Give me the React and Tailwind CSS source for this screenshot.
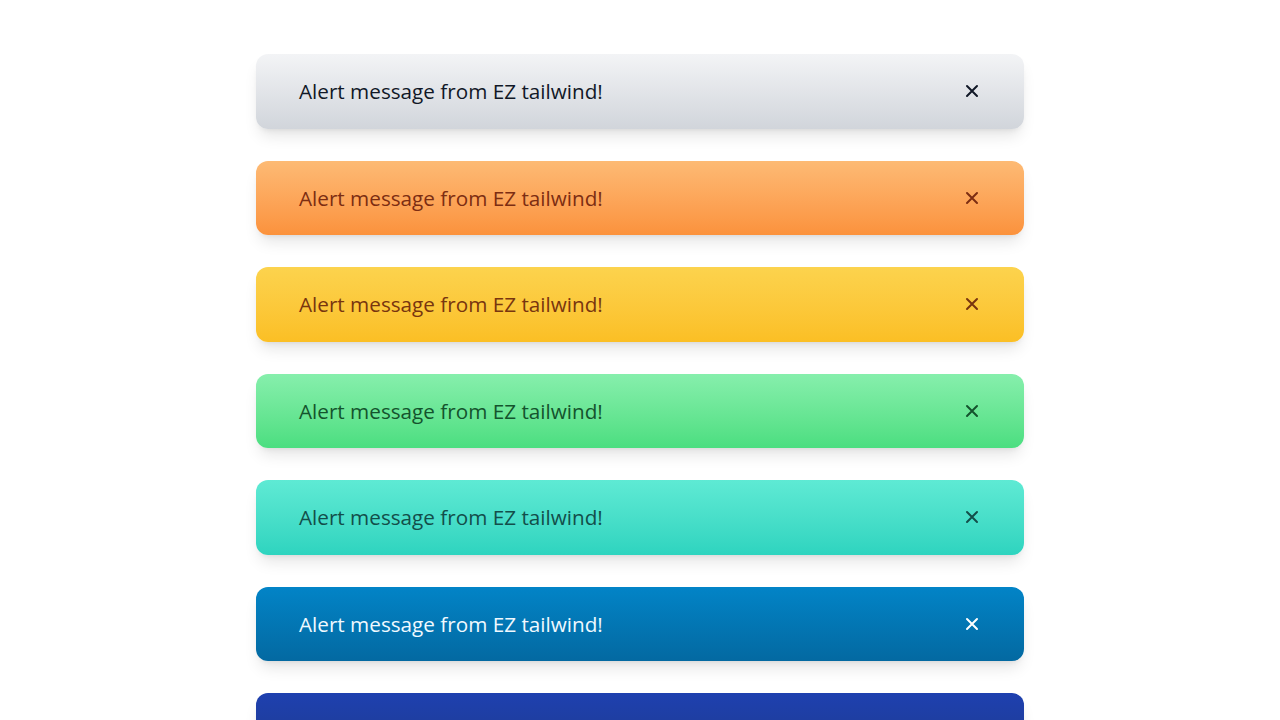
import React from 'react';

const alerts = [
    { bg: 'bg-gradient-to-b from-[#f3f4f6] to-[#d1d5db]', text: 'text-[#111827]', icon: 'text-[#111827]' },
    { bg: 'bg-gradient-to-b from-[#fdba74] to-[#fb923c]', text: 'text-[#7c2d12]', icon: 'text-[#7c2d12]' },
    { bg: 'bg-gradient-to-b from-[#fcd34d] to-[#fbbf24]', text: 'text-[#78350f]', icon: 'text-[#78350f]' },
    { bg: 'bg-gradient-to-b from-[#86efac] to-[#4ade80]', text: 'text-[#14532d]', icon: 'text-[#14532d]' },
    { bg: 'bg-gradient-to-b from-[#5eead4] to-[#2dd4bf]', text: 'text-[#134e4a]', icon: 'text-[#134e4a]' },
    { bg: 'bg-gradient-to-b from-[#0284c7] to-[#0369a1]', text: 'text-[#f0f9ff]', icon: 'text-white' },
    { bg: 'bg-gradient-to-b from-[#1e40af] to-[#1e3a8a]', text: 'text-[#eff6ff]', icon: 'text-white' },
];

const CloseIcon = ({ className }) => (
    <svg viewBox="0 0 14 14" className={`h-[14px] w-[14px] ${className}`} fill="none" stroke="currentColor" strokeWidth="2" strokeLinecap="round">
        <path d="M2 2 L12 12 M12 2 L2 12" />
    </svg>
);

const Alert = ({ bg, text, icon }) => (
    <div className={`${bg} h-[74.5px] shrink-0 rounded-xl shadow-lg flex items-center justify-between pl-[43px] pr-[45px]`}>
        <span className={`${text} text-[20.7px] leading-7`}>Alert message from EZ tailwind!</span>
        <button className={`${icon}`}>
            <CloseIcon />
        </button>
    </div>
);

export default function App() {
    return (
        <div className="bg-white min-h-screen font-['Open_Sans',sans-serif]">
            <div className="mx-auto w-[768px] pt-[54px] flex flex-col gap-8 pb-10">
                {alerts.map((a, i) => (
                    <Alert key={i} {...a} />
                ))}
            </div>
        </div>
    );
}
